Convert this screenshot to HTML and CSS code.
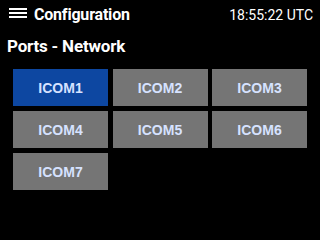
FILE: index.html
```html
<!DOCTYPE html>
<html>
<head>
<meta charset="utf-8">
<link rel="stylesheet" href="styles.css">
</head>
<body>
<div class="screen">
  <header class="topbar">
    <div class="left">
      <svg class="menu" width="18" height="12" viewBox="0 0 18 12"><rect x="0" y="0" width="18" height="2" fill="#fff"/><rect x="0" y="4" width="18" height="2" fill="#fff"/><rect x="0" y="8" width="18" height="2" fill="#fff"/></svg>
      <span class="title">Configuration</span>
    </div>
    <span class="clock">18:55:22 UTC</span>
  </header>
  <h1 class="heading">Ports - Network</h1>
  <div class="grid">
    <div class="btn active">ICOM1</div>
    <div class="btn">ICOM2</div>
    <div class="btn">ICOM3</div>
    <div class="btn">ICOM4</div>
    <div class="btn">ICOM5</div>
    <div class="btn">ICOM6</div>
    <div class="btn">ICOM7</div>
  </div>
</div>
</body>
</html>
```
FILE: styles.css
```css
html, body {
  margin: 0;
  padding: 0;
  background: #000;
}
.screen {
  width: 320px;
  height: 240px;
  background: #000;
  color: #fff;
  font-family: Roboto, "Liberation Sans", sans-serif;
  overflow: hidden;
}
.topbar {
  display: flex;
  justify-content: space-between;
  align-items: flex-start;
  height: 30px;
}
.left {
  display: flex;
  align-items: flex-start;
  padding-left: 9px;
}
.menu {
  margin-top: 8px;
}
.title {
  font-weight: bold;
  font-size: 16px;
  line-height: 16px;
  margin-left: 7px;
  margin-top: 7px;
  letter-spacing: -0.2px;
}
.clock {
  font-size: 14px;
  line-height: 14px;
  margin-top: 8px;
  margin-right: 7px;
}
.heading {
  margin: 6px 0 0 7px;
  font-size: 17px;
  line-height: 20px;
  font-weight: bold;
  letter-spacing: -0.2px;
}
.grid {
  display: grid;
  grid-template-columns: repeat(3, 95px);
  grid-auto-rows: 37px;
  column-gap: 4.5px;
  row-gap: 5px;
  margin: 13px 0 0 13px;
}
.btn {
  background: #757575;
  color: #d6e2ff;
  font-family: "Liberation Sans", Arial, sans-serif;
  font-weight: bold;
  font-size: 14px;
  display: flex;
  align-items: center;
  justify-content: center;
}
.btn.active {
  background: #0d47a1;
}
```
